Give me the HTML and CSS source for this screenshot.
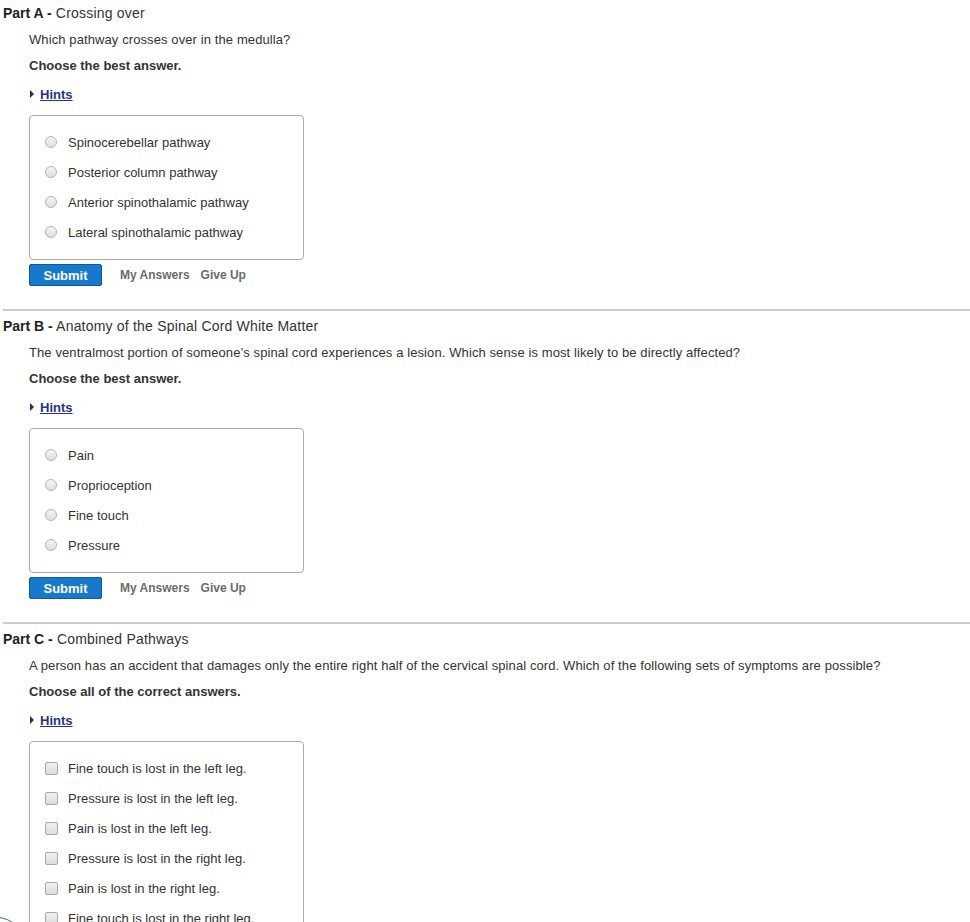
FILE: index.html
```html
<!DOCTYPE html>
<html>
<head>
<meta charset="utf-8">
<link rel="stylesheet" href="styles.css">
</head>
<body>
<div class="page">

  <section class="part">
    <div class="part-title"><b>Part A -</b> Crossing over</div>
    <div class="part-body">
      <p class="question">Which pathway crosses over in the medulla?</p>
      <p class="instruct">Choose the best answer.</p>
      <div class="hints"><span class="tri"></span><a href="#">Hints</a></div>
      <div class="choices">
        <div class="choice"><span class="radio"></span>Spinocerebellar pathway</div>
        <div class="choice"><span class="radio"></span>Posterior column pathway</div>
        <div class="choice"><span class="radio"></span>Anterior spinothalamic pathway</div>
        <div class="choice"><span class="radio"></span>Lateral spinothalamic pathway</div>
      </div>
      <div class="actions">
        <button class="submit">Submit</button>
        <span class="link">My Answers</span>
        <span class="link">Give Up</span>
      </div>
    </div>
    <div class="sep"></div>
  </section>

  <section class="part">
    <div class="part-title"><b>Part B -</b> Anatomy of the Spinal Cord White Matter</div>
    <div class="part-body">
      <p class="question">The ventralmost portion of someone’s spinal cord experiences a lesion. Which sense is most likely to be directly affected?</p>
      <p class="instruct">Choose the best answer.</p>
      <div class="hints"><span class="tri"></span><a href="#">Hints</a></div>
      <div class="choices">
        <div class="choice"><span class="radio"></span>Pain</div>
        <div class="choice"><span class="radio"></span>Proprioception</div>
        <div class="choice"><span class="radio"></span>Fine touch</div>
        <div class="choice"><span class="radio"></span>Pressure</div>
      </div>
      <div class="actions">
        <button class="submit">Submit</button>
        <span class="link">My Answers</span>
        <span class="link">Give Up</span>
      </div>
    </div>
    <div class="sep"></div>
  </section>

  <section class="part">
    <div class="part-title"><b>Part C -</b> Combined Pathways</div>
    <div class="part-body">
      <p class="question">A person has an accident that damages only the entire right half of the cervical spinal cord. Which of the following sets of symptoms are possible?</p>
      <p class="instruct">Choose all of the correct answers.</p>
      <div class="hints"><span class="tri"></span><a href="#">Hints</a></div>
      <div class="choices">
        <div class="choice"><span class="check"></span>Fine touch is lost in the left leg.</div>
        <div class="choice"><span class="check"></span>Pressure is lost in the left leg.</div>
        <div class="choice"><span class="check"></span>Pain is lost in the left leg.</div>
        <div class="choice"><span class="check"></span>Pressure is lost in the right leg.</div>
        <div class="choice"><span class="check"></span>Pain is lost in the right leg.</div>
        <div class="choice"><span class="check"></span>Fine touch is lost in the right leg.</div>
      </div>
    </div>
  </section>

</div>
<div class="corner-circle"></div>
</body>
</html>
```

FILE: styles.css
```css
html {
  overflow: hidden;
}
body {
  margin: 0;
  background: #fff;
  font-family: "Liberation Sans", Arial, sans-serif;
  color: #333;
}
.page {
  padding-left: 3px;
}
.part {
  padding-top: 4px;
}
.part-title {
  font-size: 14px;
  line-height: 18px;
  color: #333;
  letter-spacing: 0.2px;
}
.part-title b {
  color: #222;
  letter-spacing: 0;
}
.part-body {
  margin-left: 26px;
}
.question {
  margin: 10px 0 0;
  font-size: 13px;
  line-height: 16px;
  color: #333;
  letter-spacing: 0.1px;
}
.instruct {
  margin: 10px 0 0;
  font-size: 13px;
  line-height: 16px;
  font-weight: bold;
  color: #333;
}
.hints {
  margin-top: 12px;
  display: flex;
  align-items: center;
  height: 16px;
  font-size: 13px;
  font-weight: bold;
}
.tri {
  width: 0;
  height: 0;
  border-top: 4px solid transparent;
  border-bottom: 4px solid transparent;
  border-left: 4px solid #1f2a70;
  margin-left: 1px;
  margin-right: 6px;
}
.hints a {
  color: #24348e;
  text-decoration: underline;
}
.choices {
  margin-top: 13px;
  width: 273px;
  border: 1px solid #aaa;
  border-radius: 4px;
  padding: 11px 0 12px;
}
.choice {
  display: flex;
  align-items: center;
  height: 30px;
  padding-left: 15px;
  font-size: 13px;
  color: #333;
}
.radio {
  width: 10px;
  height: 10px;
  border: 1px solid #b4b4b4;
  border-radius: 50%;
  background: linear-gradient(#f5f5f5, #dedede);
  margin-right: 11px;
  flex: none;
}
.check {
  width: 11px;
  height: 11px;
  border: 1px solid #a9a9a9;
  border-radius: 2px;
  background: linear-gradient(#f0f0f0, #dcdcdc);
  margin-right: 10px;
  flex: none;
}
.actions {
  margin-top: 4px;
  display: flex;
  align-items: center;
}
.submit {
  width: 73px;
  height: 22px;
  padding: 0;
  border: 1px solid #0e5a9e;
  border-radius: 2px;
  background: #1779cc;
  color: #fff;
  font-family: "Liberation Sans", Arial, sans-serif;
  font-weight: bold;
  font-size: 13px;
  margin-right: 18px;
}
.link {
  font-size: 12px;
  font-weight: bold;
  color: #6b6b6b;
  margin-right: 11px;
}
.sep {
  margin-top: 23px;
  margin-bottom: 2px;
  height: 2px;
  background: #cccccc;
}
.corner-circle {
  position: fixed;
  left: -30px;
  top: 917px;
  width: 52px;
  height: 52px;
  border: 1.5px solid #4a6685;
  border-radius: 50%;
}
```
